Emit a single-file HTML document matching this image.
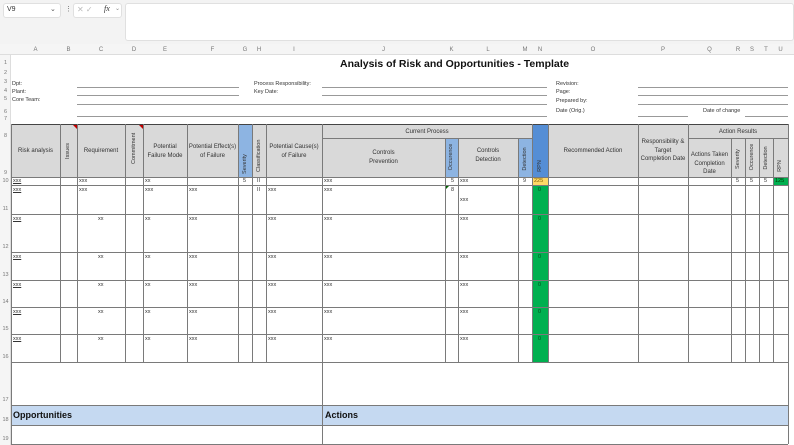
<!DOCTYPE html>
<html><head><meta charset="utf-8"><style>
*{margin:0;padding:0;box-sizing:border-box}
body{width:794px;height:445px;overflow:hidden;background:#fff;font-family:"Liberation Sans",sans-serif;position:relative;color:#222}
div{position:absolute}
.v{width:1px;background:#7a7a7a}
.h{height:1px;background:#7a7a7a}
.t{font-size:5.5px;white-space:nowrap;color:#333}
.c{text-align:center;white-space:nowrap;line-height:8.5px;font-size:6px;color:#333}
.r{font-size:5.5px;color:#777;width:11px;text-align:center}
.rot{transform:rotate(-90deg);font-size:5.5px;white-space:nowrap;color:#333}
.ul{height:1px;background:#999}
.col{font-size:6px;color:#777;top:47px;text-align:center}
</style></head><body>
<div style="left:0;top:0;width:794px;height:44px;background:#f3f3f3"></div>
<div style="left:3px;top:3px;width:58px;height:15px;background:#fff;border:1px solid #e0e0e0;border-radius:3px"></div>
<div class="t" style="left:7px;top:6px;font-size:7px;color:#333">V9</div>
<div class="t" style="left:50px;top:5px;font-size:7px;color:#555">⌄</div>
<div class="t" style="left:65px;top:5px;font-size:7px;color:#666">⋮</div>
<div style="left:73px;top:3px;width:49px;height:15px;background:#fff;border:1px solid #e0e0e0;border-radius:3px"></div>
<div class="t" style="left:77px;top:5px;font-size:8px;color:#bbb">✕ ✓</div>
<div class="t" style="left:104px;top:4px;font-size:8px;font-style:italic;font-family:'Liberation Serif',serif;color:#333">fx</div>
<div class="t" style="left:115px;top:5px;font-size:6px;color:#888">⌄</div>
<div style="left:125px;top:3px;width:669px;height:38px;background:#fff;border:1px solid #e0e0e0;border-radius:3px"></div>
<div style="left:0;top:44px;width:794px;height:11px;background:#f5f5f5;border-bottom:1px solid #ddd"></div>
<div style="left:0;top:55px;width:11px;height:390px;background:#f5f5f5;border-right:1px solid #ddd"></div>
<div class="col" style="left:11px;width:49px">A</div><div class="col" style="left:60px;width:17px">B</div>
<div class="col" style="left:77px;width:48px">C</div><div class="col" style="left:125px;width:18px">D</div>
<div class="col" style="left:143px;width:44px">E</div><div class="col" style="left:187px;width:51px">F</div>
<div class="col" style="left:238px;width:14px">G</div><div class="col" style="left:252px;width:14px">H</div>
<div class="col" style="left:266px;width:56px">I</div><div class="col" style="left:322px;width:123px">J</div>
<div class="col" style="left:445px;width:13px">K</div><div class="col" style="left:458px;width:60px">L</div>
<div class="col" style="left:518px;width:14px">M</div><div class="col" style="left:532px;width:16px">N</div>
<div class="col" style="left:548px;width:90px">O</div><div class="col" style="left:638px;width:50px">P</div>
<div class="col" style="left:688px;width:43px">Q</div><div class="col" style="left:731px;width:14px">R</div>
<div class="col" style="left:745px;width:14px">S</div><div class="col" style="left:759px;width:14px">T</div>
<div class="col" style="left:773px;width:15px">U</div>
<div class="r" style="top:60px">1</div><div class="r" style="top:70px">2</div><div class="r" style="top:79px">3</div>
<div class="r" style="top:88px">4</div><div class="r" style="top:96px">5</div><div class="r" style="top:109px">6</div>
<div class="r" style="top:116px">7</div><div class="r" style="top:133px">8</div><div class="r" style="top:170px">9</div>
<div class="r" style="top:178px">10</div><div class="r" style="top:206px">11</div><div class="r" style="top:244px">12</div>
<div class="r" style="top:272px">13</div><div class="r" style="top:299px">14</div><div class="r" style="top:326px">15</div>
<div class="r" style="top:354px">16</div><div class="r" style="top:397px">17</div><div class="r" style="top:417px">18</div>
<div class="r" style="top:436px">19</div>
<div class="t" style="left:340px;top:58px;font-size:10.5px;font-weight:bold;color:#111">Analysis of Risk and Opportunities - Template</div>
<div class="t" style="left:12px;top:81px">Dpt:</div>
<div class="t" style="left:12px;top:89px">Plant:</div>
<div class="t" style="left:12px;top:97px">Core Team:</div>
<div class="ul" style="left:77px;top:87px;width:162px"></div>
<div class="ul" style="left:77px;top:95px;width:162px"></div>
<div class="ul" style="left:77px;top:104px;width:470px"></div>
<div class="ul" style="left:77px;top:116px;width:470px"></div>
<div class="t" style="left:254px;top:81px">Process Responsibility:</div>
<div class="t" style="left:254px;top:89px">Key Date:</div>
<div class="ul" style="left:322px;top:87px;width:225px"></div>
<div class="ul" style="left:322px;top:95px;width:225px"></div>
<div class="t" style="left:556px;top:81px">Revision:</div>
<div class="t" style="left:556px;top:89px">Page:</div>
<div class="t" style="left:556px;top:98px">Prepared by:</div>
<div class="t" style="left:556px;top:108px">Date (Orig.)</div>
<div class="t" style="left:703px;top:108px">Date of change</div>
<div class="ul" style="left:638px;top:87px;width:150px"></div>
<div class="ul" style="left:638px;top:95px;width:150px"></div>
<div class="ul" style="left:638px;top:104px;width:150px"></div>
<div class="ul" style="left:638px;top:116px;width:50px"></div>
<div class="ul" style="left:745px;top:116px;width:43px"></div>
<div style="left:11px;top:124px;width:777px;height:53px;background:#d9d9d9"></div>
<div style="left:238px;top:124px;width:14px;height:53px;background:#8db4e2"></div>
<div style="left:445px;top:138px;width:13px;height:39px;background:#8db4e2"></div>
<div style="left:518px;top:138px;width:14px;height:39px;background:#8db4e2"></div>
<div style="left:532px;top:124px;width:16px;height:53px;background:#558ed5"></div>
<div style="left:11px;top:124px;width:777px;height:1px;background:#444"></div>
<div class="h" style="left:322px;top:138px;width:210px"></div>
<div class="h" style="left:688px;top:138px;width:100px"></div>
<div style="left:73px;top:125px;width:0;height:0;border-left:4px solid transparent;border-top:4px solid #c00000"></div>
<div style="left:139px;top:125px;width:0;height:0;border-left:4px solid transparent;border-top:4px solid #c00000"></div>
<div class="c" style="left:11px;top:147px;width:49px">Risk analysis</div>
<div class="rot" style="left:58px;top:148px;width:20px;text-align:center">Issues</div>
<div class="c" style="left:77px;top:147px;width:48px">Requirement</div>
<div class="rot" style="left:119px;top:146px;width:30px;text-align:center">Commitment</div>
<div class="c" style="left:143px;top:143px;width:44px">Potential<br>Failure Mode</div>
<div class="c" style="left:187px;top:143px;width:51px">Potential Effect(s)<br>of Failure</div>
<div class="rot" style="left:230px;top:161px;width:30px;text-align:center">Severity</div>
<div class="rot" style="left:244px;top:154px;width:30px;text-align:center">Classification</div>
<div class="c" style="left:266px;top:143px;width:56px">Potential Cause(s)<br>of Failure</div>
<div class="c" style="left:322px;top:128px;width:210px">Current Process</div>
<div class="c" style="left:322px;top:149px;width:123px">Controls<br>Prevention</div>
<div class="rot" style="left:436px;top:154px;width:30px;text-align:center">Occurence</div>
<div class="c" style="left:458px;top:147px;width:60px">Controls<br>Detection</div>
<div class="rot" style="left:510px;top:156px;width:30px;text-align:center">Detection</div>
<div class="rot" style="left:525px;top:163px;width:30px;text-align:center">RPN</div>
<div class="c" style="left:548px;top:147px;width:90px">Recommended Action</div>
<div class="c" style="left:638px;top:138px;width:50px">Responsibility &amp;<br>Target<br>Completion Date</div>
<div class="c" style="left:688px;top:128px;width:100px">Action Results</div>
<div class="c" style="left:688px;top:151px;width:43px">Actions Taken<br>Completion<br>Date</div>
<div class="rot" style="left:723px;top:156px;width:30px;text-align:center">Severity</div>
<div class="rot" style="left:737px;top:154px;width:30px;text-align:center">Occurence</div>
<div class="rot" style="left:751px;top:155px;width:30px;text-align:center">Detection</div>
<div class="rot" style="left:765px;top:163px;width:30px;text-align:center">RPN</div>
<div style="left:532px;top:177px;width:16px;height:8px;background:#ffd966"></div>
<div style="left:532px;top:185px;width:16px;height:177px;background:#00b050"></div>
<div style="left:773px;top:177px;width:15px;height:8px;background:#00b050"></div>
<div class="v" style="left:11px;top:124px;height:320px"></div>
<div class="v" style="left:60px;top:124px;height:238px"></div>
<div class="v" style="left:77px;top:124px;height:238px"></div>
<div class="v" style="left:125px;top:124px;height:238px"></div>
<div class="v" style="left:143px;top:124px;height:238px"></div>
<div class="v" style="left:187px;top:124px;height:238px"></div>
<div class="v" style="left:238px;top:124px;height:238px"></div>
<div class="v" style="left:252px;top:124px;height:238px"></div>
<div class="v" style="left:266px;top:124px;height:238px"></div>
<div class="v" style="left:322px;top:124px;height:320px"></div>
<div class="v" style="left:445px;top:138px;height:224px"></div>
<div class="v" style="left:458px;top:138px;height:224px"></div>
<div class="v" style="left:518px;top:138px;height:224px"></div>
<div class="v" style="left:532px;top:124px;height:238px"></div>
<div class="v" style="left:548px;top:124px;height:238px"></div>
<div class="v" style="left:638px;top:124px;height:238px"></div>
<div class="v" style="left:688px;top:124px;height:238px"></div>
<div class="v" style="left:731px;top:138px;height:224px"></div>
<div class="v" style="left:745px;top:138px;height:224px"></div>
<div class="v" style="left:759px;top:138px;height:224px"></div>
<div class="v" style="left:773px;top:138px;height:224px"></div>
<div class="v" style="left:788px;top:124px;height:320px"></div>
<div class="h" style="left:11px;top:177px;width:777px"></div>
<div class="h" style="left:11px;top:185px;width:777px"></div>
<div class="h" style="left:11px;top:214px;width:777px"></div>
<div class="h" style="left:11px;top:252px;width:777px"></div>
<div class="h" style="left:11px;top:280px;width:777px"></div>
<div class="h" style="left:11px;top:307px;width:777px"></div>
<div class="h" style="left:11px;top:334px;width:777px"></div>
<div class="h" style="left:11px;top:362px;width:777px"></div>
<div style="left:12px;top:405px;width:776px;height:20px;background:#c5d9f1"></div>
<div class="h" style="left:11px;top:405px;width:777px"></div>
<div class="h" style="left:11px;top:425px;width:777px"></div>
<div class="h" style="left:11px;top:444px;width:777px"></div>
<div class="v" style="left:322px;top:362px;height:82px"></div>
<div class="t" style="left:13px;top:410px;font-size:9px;font-weight:bold;color:#111">Opportunities</div>
<div class="t" style="left:325px;top:410px;font-size:9px;font-weight:bold;color:#111">Actions</div>
<div class="t" style="left:13px;top:178px;text-decoration:underline">xxx</div>
<div class="t" style="left:79px;top:178px">xxx</div>
<div class="t" style="left:145px;top:178px">xx</div>
<div class="t" style="left:243px;top:178px">5</div>
<div class="t" style="left:257px;top:178px">II</div>
<div class="t" style="left:324px;top:178px">xxx</div>
<div class="t" style="left:451px;top:178px">5</div>
<div class="t" style="left:460px;top:178px">xxx</div>
<div class="t" style="left:523px;top:178px">9</div>
<div class="t" style="left:534px;top:178px;color:#7f6000">225</div>
<div class="t" style="left:736px;top:178px">5</div>
<div class="t" style="left:750px;top:178px">5</div>
<div class="t" style="left:764px;top:178px">5</div>
<div class="t" style="left:775px;top:178px;color:#003300">125</div>
<div class="t" style="left:13px;top:187px;text-decoration:underline">xxx</div>
<div class="t" style="left:79px;top:187px">xxx</div>
<div class="t" style="left:145px;top:187px">xxx</div>
<div class="t" style="left:189px;top:187px">xxx</div>
<div class="t" style="left:257px;top:187px">II</div>
<div class="t" style="left:268px;top:187px">xxx</div>
<div class="t" style="left:324px;top:187px">xxx</div>
<div style="left:446px;top:186px;width:0;height:0;border-right:3px solid transparent;border-top:3px solid #006100"></div>
<div class="t" style="left:451px;top:187px">8</div>
<div class="t" style="left:460px;top:197px">xxx</div>
<div class="t" style="left:538px;top:187px;color:#004d1a">0</div>
<div class="t" style="left:13px;top:216px;text-decoration:underline">xxx</div>
<div class="t" style="left:98px;top:216px">xx</div><div class="t" style="left:145px;top:216px">xx</div>
<div class="t" style="left:189px;top:216px">xxx</div><div class="t" style="left:268px;top:216px">xxx</div>
<div class="t" style="left:324px;top:216px">xxx</div><div class="t" style="left:460px;top:216px">xxx</div>
<div class="t" style="left:538px;top:216px;color:#004d1a">0</div>
<div class="t" style="left:13px;top:254px;text-decoration:underline">xxx</div>
<div class="t" style="left:98px;top:254px">xx</div><div class="t" style="left:145px;top:254px">xx</div>
<div class="t" style="left:189px;top:254px">xxx</div><div class="t" style="left:268px;top:254px">xxx</div>
<div class="t" style="left:324px;top:254px">xxx</div><div class="t" style="left:460px;top:254px">xxx</div>
<div class="t" style="left:538px;top:254px;color:#004d1a">0</div>
<div class="t" style="left:13px;top:282px;text-decoration:underline">xxx</div>
<div class="t" style="left:98px;top:282px">xx</div><div class="t" style="left:145px;top:282px">xx</div>
<div class="t" style="left:189px;top:282px">xxx</div><div class="t" style="left:268px;top:282px">xxx</div>
<div class="t" style="left:324px;top:282px">xxx</div><div class="t" style="left:460px;top:282px">xxx</div>
<div class="t" style="left:538px;top:282px;color:#004d1a">0</div>
<div class="t" style="left:13px;top:309px;text-decoration:underline">xxx</div>
<div class="t" style="left:98px;top:309px">xx</div><div class="t" style="left:145px;top:309px">xx</div>
<div class="t" style="left:189px;top:309px">xxx</div><div class="t" style="left:268px;top:309px">xxx</div>
<div class="t" style="left:324px;top:309px">xxx</div><div class="t" style="left:460px;top:309px">xxx</div>
<div class="t" style="left:538px;top:309px;color:#004d1a">0</div>
<div class="t" style="left:13px;top:336px;text-decoration:underline">xxx</div>
<div class="t" style="left:98px;top:336px">xx</div><div class="t" style="left:145px;top:336px">xx</div>
<div class="t" style="left:189px;top:336px">xxx</div><div class="t" style="left:268px;top:336px">xxx</div>
<div class="t" style="left:324px;top:336px">xxx</div><div class="t" style="left:460px;top:336px">xxx</div>
<div class="t" style="left:538px;top:336px;color:#004d1a">0</div>
</body></html>
